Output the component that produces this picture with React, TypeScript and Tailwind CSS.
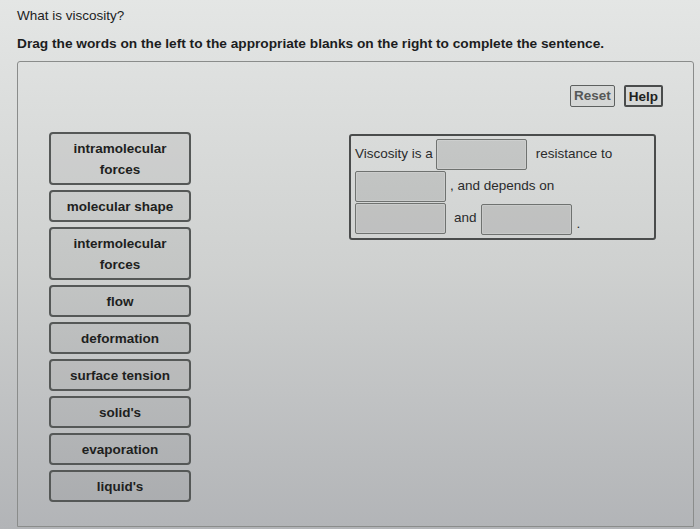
import React from 'react';

const words = [
  ['intramolecular', 'forces'],
  ['molecular shape'],
  ['intermolecular', 'forces'],
  ['flow'],
  ['deformation'],
  ['surface tension'],
  ["solid's"],
  ['evaporation'],
  ["liquid's"],
];

// Drop target inside the sentence
const Blank = ({ className = '' }: { className?: string }) => (
  <div
    className={`w-[91px] h-[31px] shrink-0 rounded-[2px] border border-[#6f7270] bg-black/[0.09] shadow-[inset_0_0_0_1px_rgba(255,255,255,0.15)] ${className}`}
  />
);

const WordTile = ({ lines }: { lines: string[] }) => (
  <div
    className={`w-[142px] ${lines.length > 1 ? 'h-[53px]' : 'h-[32px]'} rounded-[4px] border-2 border-[#555857] bg-black/[0.05] flex flex-col items-center justify-center font-bold text-[13.5px] leading-[21px] text-[#1e1f20]`}
  >
    {lines.map((l) => (
      <span key={l}>{l}</span>
    ))}
  </div>
);

export default function App() {
  return (
    <div
      className="w-[700px] h-[529px] overflow-hidden bg-gradient-to-b from-[#e4e6e5] via-[#cfd1d0] to-[#b2b4b7] text-[#1c1d1e]"
      style={{ fontFamily: '"Liberation Sans", Arial, sans-serif' }}
    >
      <div className="pl-[17px] pt-[7px] text-[13.5px] leading-[18px]">What is viscosity?</div>
      <div className="pl-[17px] pt-[10px] text-[13.7px] leading-[18px] font-bold">
        Drag the words on the left to the appropriate blanks on the right to complete the sentence.
      </div>

      <div className="ml-[17px] mt-[8px] w-[677px] h-[466px] border border-[#8a8c8b] rounded-t-[3px]">
        {/* toolbar */}
        <div className="flex justify-end gap-[9px] pr-[30px] pt-[23px]">
          <button className="h-[22px] px-[3px] rounded-[2px] border border-[#5d605f] bg-black/[0.03] text-[13.5px] font-bold text-[#555857]">
            Reset
          </button>
          <button className="h-[22px] px-[3px] rounded-[2px] border-2 border-[#4a4c4c] bg-black/[0.03] text-[13.5px] font-bold text-[#1e1f20]">
            Help
          </button>
        </div>

        <div className="flex mt-[25px]">
          {/* word bank */}
          <div className="ml-[31px] flex flex-col gap-[5px]">
            {words.map((w) => (
              <WordTile key={w.join(' ')} lines={w} />
            ))}
          </div>

          {/* sentence */}
          <div className="ml-[158px] mt-[2px] w-[307px] h-[106px] rounded-[3px] border-2 border-[#4a4c4c] px-[4px] pt-[3px] flex flex-col gap-[1px] text-[13.5px] text-[#2a2b2c]">
            <div className="flex items-center h-[31px]">
              <span>Viscosity is a</span>
              <Blank className="ml-[3px]" />
              <span className="ml-[9px]">resistance to</span>
            </div>
            <div className="flex items-center h-[31px]">
              <Blank />
              <span className="ml-[4px]">, and depends on</span>
            </div>
            <div className="flex items-center h-[31px]">
              <Blank />
              <span className="ml-[8px]">and</span>
              <Blank className="ml-[4px] mt-[2px]" />
              <span className="ml-[5px] self-end mb-[2px] leading-[16px]">.</span>
            </div>
          </div>
        </div>
      </div>
    </div>
  );
}
